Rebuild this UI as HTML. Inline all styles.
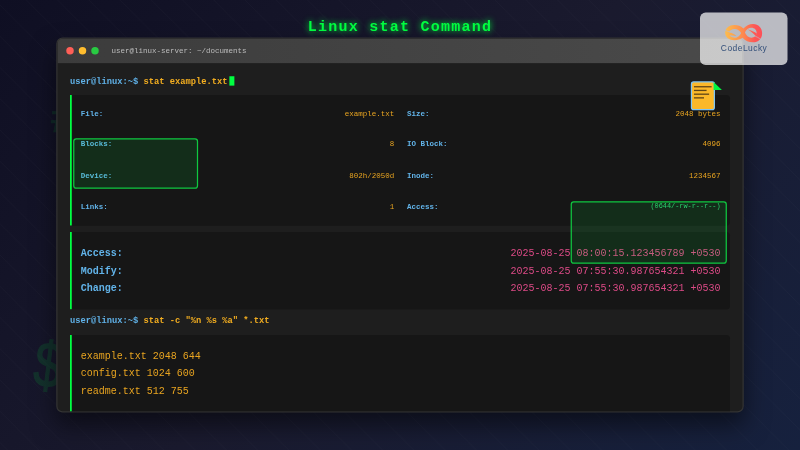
<!DOCTYPE html>
<html lang="en">
<head>
<meta charset="utf-8">
<title>Linux stat Command</title>
<style>
*{box-sizing:border-box;margin:0;padding:0}
html,body{width:800px;height:450px;overflow:hidden;background:#0f0f23}
body{font-family:"Liberation Mono",monospace;line-height:1.4}
#stage{position:absolute;left:0;top:0;width:1280px;height:720px;transform:scale(.625);transform-origin:0 0;overflow:hidden;
 background:linear-gradient(135deg,#0f0f23 0%,#1a1a2e 50%,#16213e 100%)}
#lines{position:absolute;inset:0;background-image:linear-gradient(45deg,transparent 49%,rgba(255,255,255,.019) 50%,transparent 51%);background-size:50px 50px;background-position:0 8px}
.sym{position:absolute;color:rgba(0,255,65,.13);font-weight:bold;line-height:1}
h1{position:absolute;left:0;width:1280px;top:30px;text-align:center;font-size:24px;font-weight:bold;letter-spacing:2px;color:#00ff41;text-shadow:0 0 10px #00ff41;line-height:27.2px}
#win{position:absolute;left:90px;top:59.6px;width:1100px;height:600px;background:#1e1e1e;border:2px solid #333;border-radius:10px;overflow:hidden;box-shadow:0 20px 40px rgba(0,0,0,.5)}
#bar{height:39px;background:linear-gradient(90deg,#3c3c3c,#4a4a4a);display:flex;align-items:center;padding-left:14.4px}
.dot{width:12px;height:12px;border-radius:50%;margin-right:8px}
#bar span{margin-left:12px;font-size:12px;color:#bbb}
#body{padding:20px}
.prompt{font-size:14px;font-weight:bold;height:19.6px;white-space:pre;display:flex;align-items:center}
.u{color:#5fb0e6}.c{color:#f2ad20}
.cur{display:inline-block;width:8px;height:15px;background:#00ff41;margin-left:3px;position:relative;top:-1.3px}
.blk{position:relative;background:#161616;border-left:3px solid #00ff41;border-radius:0 6px 6px 0;padding:15px 15px 15px 14px}
#b1{margin-top:12px;height:209px}
.grid{display:grid;grid-template-columns:1fr 1fr;column-gap:20px;row-gap:19.6px}
.it{display:flex;justify-content:space-between;align-items:center;height:30px;font-size:12px}
.k{color:#62b4ea;font-weight:bold}.v{color:#e8a420}.g{color:#2ecc71;font-size:11px}
.hl{position:absolute;border:2px solid #0fc840;background:rgba(0,255,65,.1);border-radius:5px}
#b2,#b3{margin-top:10px;height:124px;padding-top:23px;font-size:16px}
.row{display:flex;justify-content:space-between;height:22.4px;margin-bottom:6.2px}
.p{color:#dc4a86}
#p2{margin-top:7.5px}
#b3{margin-top:13.5px;color:#e8a420;height:130px}
</style>
</head>
<body>
<div id="stage">
<div id="lines"></div>
<div class="sym" style="left:45px;top:539px;font-size:105px;transform:rotate(7deg) scaleX(.76);font-weight:normal;color:#00ff41;opacity:.115;-webkit-text-stroke:2px #00ff41">$</div>
<div class="sym" id="hash" style="left:80px;top:157.4px;font-size:71px;font-weight:normal;color:#00ff41;opacity:.1;-webkit-text-stroke:1px #00ff41">#</div>
<h1>Linux stat Command</h1>
<div id="win">
 <div id="bar"><i class="dot" style="background:#ff5f57"></i><i class="dot" style="background:#ffbd2e"></i><i class="dot" style="background:#28ca42"></i><span>user@linux-server: ~/documents</span></div>
 <div id="body">
  <div class="prompt"><span class="u">user@linux:~$ </span><span class="c">stat example.txt</span><i class="cur"></i></div>
  <div class="blk" id="b1">
   <div class="grid">
    <div class="it"><span class="k">File:</span><span class="v">example.txt</span></div>
    <div class="it"><span class="k">Size:</span><span class="v">2048 bytes</span></div>
    <div class="it"><span class="k">Blocks:</span><span class="v">8</span></div>
    <div class="it"><span class="k">IO Block:</span><span class="v">4096</span></div>
    <div class="it"><span class="k">Device:</span><span class="v">802h/2050d</span></div>
    <div class="it"><span class="k">Inode:</span><span class="v">1234567</span></div>
    <div class="it"><span class="k">Links:</span><span class="v">1</span></div>
    <div class="it"><span class="k">Access:</span><span class="g">(0644/-rw-r--r--)</span></div>
   </div>
  </div>
  <div class="blk" id="b2">
   <div class="row"><span class="k">Access:</span><span class="p">2025-08-25 08:00:15.123456789 +0530</span></div>
   <div class="row"><span class="k">Modify:</span><span class="p">2025-08-25 07:55:30.987654321 +0530</span></div>
   <div class="row"><span class="k">Change:</span><span class="p">2025-08-25 07:55:30.987654321 +0530</span></div>
  </div>
  <div class="prompt" id="p2"><span class="u">user@linux:~$ </span><span class="c">stat -c "%n %s %a" *.txt</span></div>
  <div class="blk" id="b3">
   <div class="row">example.txt 2048 644</div>
   <div class="row">config.txt 1024 600</div>
   <div class="row">readme.txt 512 755</div>
  </div>
 </div>
</div>
<div class="hl" style="left:117px;top:221px;width:200px;height:81px"></div>
<div class="hl" style="left:913px;top:322px;width:250px;height:100px"></div>
<svg id="fileicon" style="position:absolute;left:1100px;top:125px;overflow:visible" width="70" height="60" viewBox="0 0 70 60">
 <rect x="6.3" y="6.1" width="36.7" height="44.3" rx="3.5" fill="#fbb829" stroke="#7fc4f3" stroke-width="2"/>
 <polygon points="41.8,6.2 41.8,18.8 55,18.8" fill="#00f542"/>
 <g stroke="#5f4517" stroke-width="2.1">
  <line x1="10.3" y1="13.8" x2="38.6" y2="13.8"/>
  <line x1="10.3" y1="19.7" x2="30.5" y2="19.7"/>
  <line x1="10.3" y1="25.7" x2="34.6" y2="25.7"/>
  <line x1="10.3" y1="31.6" x2="26.4" y2="31.6"/>
 </g>
</svg>
<div id="logo" style="position:absolute;left:1120px;top:19.5px;width:140px;height:84px;border-radius:9px;background:rgba(255,255,255,.7)">
<svg width="140" height="84" viewBox="0 0 140 84" style="position:absolute;left:0;top:0">
 <defs><linearGradient id="lg" x1="40" y1="0" x2="100" y2="0" gradientUnits="userSpaceOnUse"><stop offset="0" stop-color="#fdbd4b"/><stop offset=".5" stop-color="#fd874f"/><stop offset=".8" stop-color="#fd5656"/><stop offset="1" stop-color="#fd5058"/></linearGradient>
 <mask id="mk" maskUnits="userSpaceOnUse" x="30" y="10" width="80" height="50"><rect x="30" y="10" width="80" height="50" fill="#fff"/>
  <path d="M39 28.3 C43 29.4,46 30.6,49.500 32.200" stroke="#000" stroke-width="1.1" fill="none"/>
  <path d="M86.500 37 C90 38.500,94 40.500,98 43.500" stroke="#000" stroke-width="1.100" fill="none"/></mask></defs>
 <g mask="url(#mk)" fill="url(#lg)">
 <path fill-rule="evenodd" d="M69.400 25.400 C65 21.500,60.500 19.900,55 19.900 C46.500 19.900,40.300 25,40.300 32.400 C40.300 39.500,46.500 44.400,55 44.400 C60.500 44.400,64.500 43,68 40.400 C72.500 45.500,78 47.600,84.500 47.600 C93.500 47.600,99.400 41.500,99.400 33 C99.400 24.500,93.500 18.200,85 18.200 C78.500 18.200,73.500 21,69.400 25.400 Z
  M65.900 32.600 C63 28.500,59.500 26.400,56 26.400 C50.500 26.400,46.300 29,46.300 33.300 C46.300 37.500,50.500 40.200,56 40.200 C60 40.200,63.500 37,65.900 32.600 Z
  M71.800 31.800 C74 27.500,77.500 24.500,82 24.500 C87.500 24.500,90.600 28,90.600 32.400 C90.600 37,87.500 40.200,82 40.200 C77.500 40.200,74 36.500,71.800 31.800 Z"/>
 <path d="M45.500 30.800 C50 32.300,54.500 34.500,58.300 37.400 C54 37.100,50 36.600,46.500 36.400 Z"/>
 <path d="M76.600 27.200 C82 28.800,87 31,91 33.600 L90 38.600 C86 34,81.500 30,76.600 27.200 Z"/>
 </g>
</svg>
<div style="position:absolute;left:0;width:140px;top:50.5px;text-align:center;font-family:'Liberation Sans',sans-serif;font-size:13.5px;letter-spacing:.75px;color:#34507a;line-height:16px;padding-left:1px">CodeLucky</div>
</div>
</div>
</body>
</html>
